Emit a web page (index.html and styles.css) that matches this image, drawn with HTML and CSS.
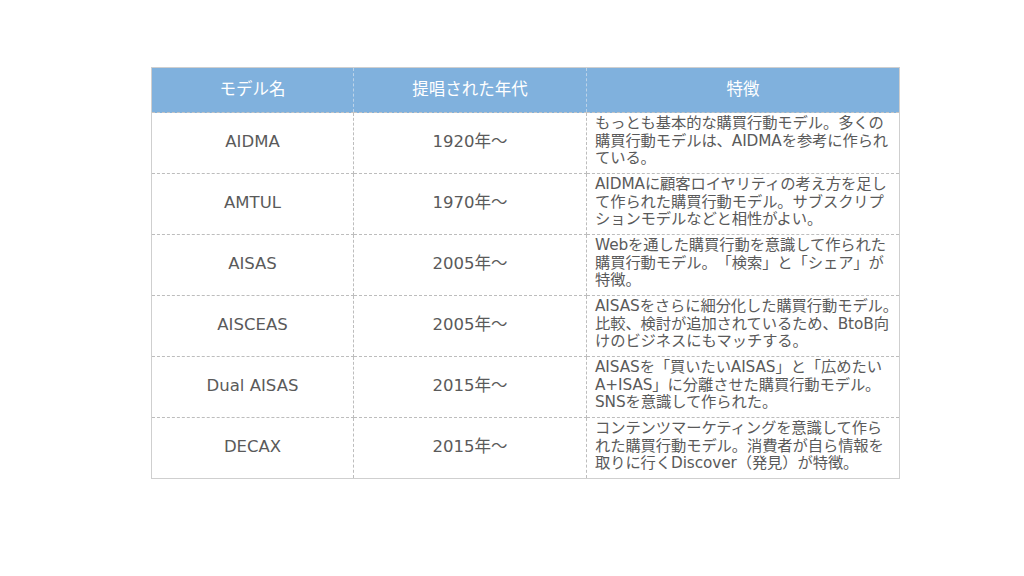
FILE: index.html
```
<!DOCTYPE html>
<html lang="ja">
<head>
<meta charset="utf-8">
<title>購買行動モデル</title>
<link rel="stylesheet" href="styles.css">
</head>
<body>
<div class="page">
<table class="models">
  <colgroup>
    <col class="c-name">
    <col class="c-year">
    <col class="c-desc">
  </colgroup>
  <thead>
    <tr><th>モデル名</th><th>提唱された年代</th><th>特徴</th></tr>
  </thead>
  <tbody>
    <tr>
      <td class="name">AIDMA</td>
      <td class="year">1920年～</td>
      <td class="desc">もっとも基本的な購買行動モデル。多くの<br>購買行動モデルは、AIDMAを参考に作られ<br>ている。</td>
    </tr>
    <tr>
      <td class="name">AMTUL</td>
      <td class="year">1970年～</td>
      <td class="desc">AIDMAに顧客ロイヤリティの考え方を足し<br>て作られた購買行動モデル。サブスクリプ<br>ションモデルなどと相性がよい。</td>
    </tr>
    <tr>
      <td class="name">AISAS</td>
      <td class="year">2005年～</td>
      <td class="desc">Webを通した購買行動を意識して作られた<br>購買行動モデル。「検索」と「シェア」が<br>特徴。</td>
    </tr>
    <tr>
      <td class="name">AISCEAS</td>
      <td class="year">2005年～</td>
      <td class="desc">AISASをさらに細分化した購買行動モデル。<br>比較、検討が追加されているため、BtoB向<br>けのビジネスにもマッチする。</td>
    </tr>
    <tr>
      <td class="name">Dual AISAS</td>
      <td class="year">2015年～</td>
      <td class="desc">AISASを「買いたいAISAS」と「広めたい<br>A+ISAS」に分離させた購買行動モデル。<br>SNSを意識して作られた。</td>
    </tr>
    <tr>
      <td class="name">DECAX</td>
      <td class="year">2015年～</td>
      <td class="desc">コンテンツマーケティングを意識して作ら<br>れた購買行動モデル。消費者が自ら情報を<br>取りに行くDiscover（発見）が特徴。</td>
    </tr>
  </tbody>
</table>
</div>
</body>
</html>
```
FILE: styles.css
```
html, body {
  margin: 0;
  padding: 0;
  background: #ffffff;
}
.page {
  padding: 67px 0 0 151px;
  font-family: "DejaVu Sans", "Noto Sans CJK JP", sans-serif;
  color: #5a5a5a;
  text-spacing-trim: space-all;
}
.models {
  border-collapse: collapse;
  table-layout: fixed;
  width: 748px;
  border: 1px solid #cfcfcf;
}
.c-name { width: 202px; }
.c-year { width: 233px; }
.c-desc { width: 313px; }
.models th {
  height: 43px;
  padding: 0 0 1px;
  background: #80b1dd;
  color: #ffffff;
  font-weight: normal;
  font-size: 16.5px;
  line-height: 20px;
  text-align: center;
  vertical-align: middle;
  border-left: 1px dashed #bcd3e8;
  border-bottom: 1px dashed #c4c4c4;
}
.models td {
  height: 57px;
  padding: 0 0 3px;
  vertical-align: middle;
  border: 1px dashed #bdbdbd;
}
.models .name,
.models .year {
  text-align: center;
  font-size: 16.5px;
  line-height: 20px;
}
.models .desc {
  padding: 0 4px 3px 8px;
  font-size: 15.3px;
  line-height: 17.5px;
  white-space: nowrap;
  letter-spacing: -0.1px;
}
```
